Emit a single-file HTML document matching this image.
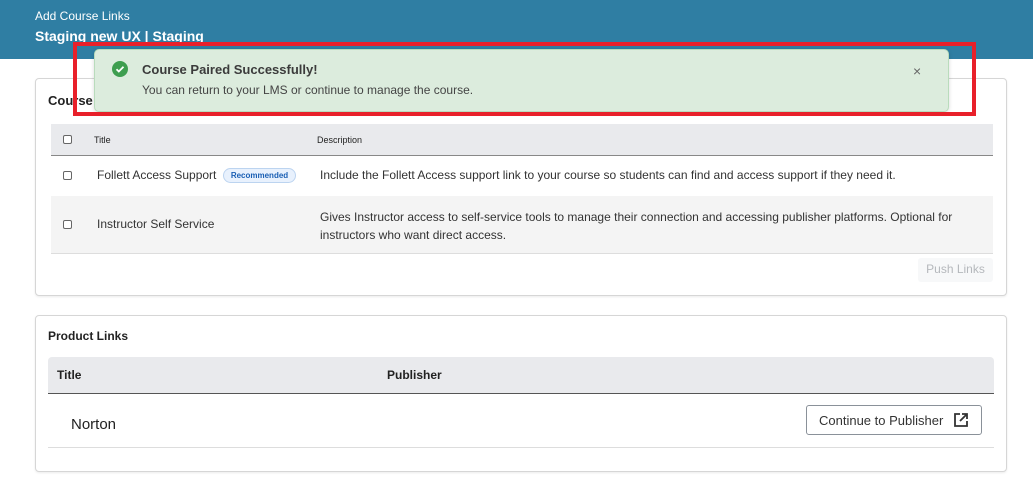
<!DOCTYPE html>
<html><head><style>
*{box-sizing:border-box;margin:0;padding:0}
body{width:1033px;height:489px;background:#fff;font-family:"Liberation Sans",sans-serif;position:relative;overflow:hidden;color:#222}
.a{position:absolute}
.hdr{left:0;top:0;width:1033px;height:59px;background:#2f7ea3;color:#fff}
.card{left:35px;width:972px;border:1px solid #d6d6d6;border-radius:4px;background:#fff;box-shadow:0 1px 2px rgba(0,0,0,.08)}
.cb{width:9px;height:9px;border:1px solid #666;border-radius:2px;background:#fff}
.t{font-size:12px;color:#333;white-space:nowrap}
</style></head><body>
<div class="a hdr">
 <div class="a" style="left:35px;top:9px;font-size:12px">Add Course Links</div>
 <div class="a" style="left:35px;top:28px;font-size:14px;font-weight:bold">Staging new UX | Staging</div>
</div>

<div class="a card" style="top:78px;height:218px"></div>
<div class="a" style="left:48px;top:93px;font-size:13px;font-weight:bold">Course</div>
<div class="a" style="left:51px;top:124px;width:942px;height:32px;background:#e9eaed;border-bottom:1px solid #888"></div>
<div class="a cb" style="left:63px;top:135px"></div>
<div class="a" style="left:94px;top:135px;font-size:9px">Title</div>
<div class="a" style="left:317px;top:135px;font-size:9px">Description</div>
<div class="a cb" style="left:63px;top:171px"></div>
<div class="a t" style="left:97px;top:168px">Follett Access Support</div>
<div class="a" style="left:223px;top:168px;width:73px;height:15px;border:1px solid #bcd4f0;background:#e8f1fd;border-radius:8px;color:#1a5fb4;font-size:8px;font-weight:bold;text-align:center;line-height:13px">Recommended</div>
<div class="a t" style="left:320px;top:168px">Include the Follett Access support link to your course so students can find and access support if they need it.</div>
<div class="a" style="left:51px;top:196px;width:942px;height:58px;background:#f4f4f4;border-bottom:1px solid #ddd"></div>
<div class="a cb" style="left:63px;top:220px"></div>
<div class="a t" style="left:97px;top:217px">Instructor Self Service</div>
<div class="a t" style="left:320px;top:208px;line-height:18px">Gives Instructor access to self-service tools to manage their connection and accessing publisher platforms. Optional for<br>instructors who want direct access.</div>
<div class="a" style="left:918px;top:258px;width:75px;height:24px;background:#f7f8f9;border-radius:3px;color:#b5b8bc;font-size:12px;text-align:center;line-height:22px">Push Links</div>

<div class="a card" style="top:315px;height:157px"></div>
<div class="a" style="left:48px;top:329px;font-size:12px;font-weight:bold">Product Links</div>
<div class="a" style="left:48px;top:357px;width:946px;height:37px;background:#e9eaed;border-bottom:1px solid #555;border-radius:4px 4px 0 0"></div>
<div class="a" style="left:57px;top:368px;font-size:12px;font-weight:bold">Title</div>
<div class="a" style="left:387px;top:368px;font-size:12px;font-weight:bold">Publisher</div>
<div class="a" style="left:71px;top:416px;font-size:15px">Norton</div>
<div class="a" style="left:48px;top:447px;width:946px;border-top:1px solid #ddd"></div>
<div class="a" style="left:806px;top:405px;width:176px;height:30px;border:1px solid #8a9199;border-radius:3px;font-size:13px;color:#333;padding:7px 0 0 12px;white-space:nowrap">Continue to Publisher
 <svg class="a" style="left:147px;top:7px" width="14" height="14" viewBox="0 0 14 14" fill="none" stroke="#333" stroke-width="1.8"><path d="M6 1H1v12h12V8"/><path d="M8 1h5v5M13 1L6 8"/></svg></div>

<div class="a" style="left:94px;top:49px;width:855px;height:63px;background:#dcecdd;border:1px solid #b9dcbc;border-radius:5px;box-shadow:0 1px 4px rgba(0,0,0,.15)"></div>
<svg class="a" style="left:112px;top:61px" width="16" height="16" viewBox="0 0 16 16"><circle cx="8" cy="8" r="8" fill="#3e9e4f"/><path d="M4.5 8.2l2.3 2.3 4.7-4.7" stroke="#fff" stroke-width="1.8" fill="none"/></svg>
<div class="a" style="left:142px;top:62px;font-size:13px;font-weight:bold;color:#3b3b3b">Course Paired Successfully!</div>
<div class="a" style="left:142px;top:83px;font-size:12px;color:#444">You can return to your LMS or continue to manage the course.</div>
<div class="a" style="left:913px;top:63px;font-size:14px;color:#666">×</div>
<div class="a" style="left:73px;top:42px;width:903px;height:74px;border:4px solid #e8202a"></div>
</body></html>
